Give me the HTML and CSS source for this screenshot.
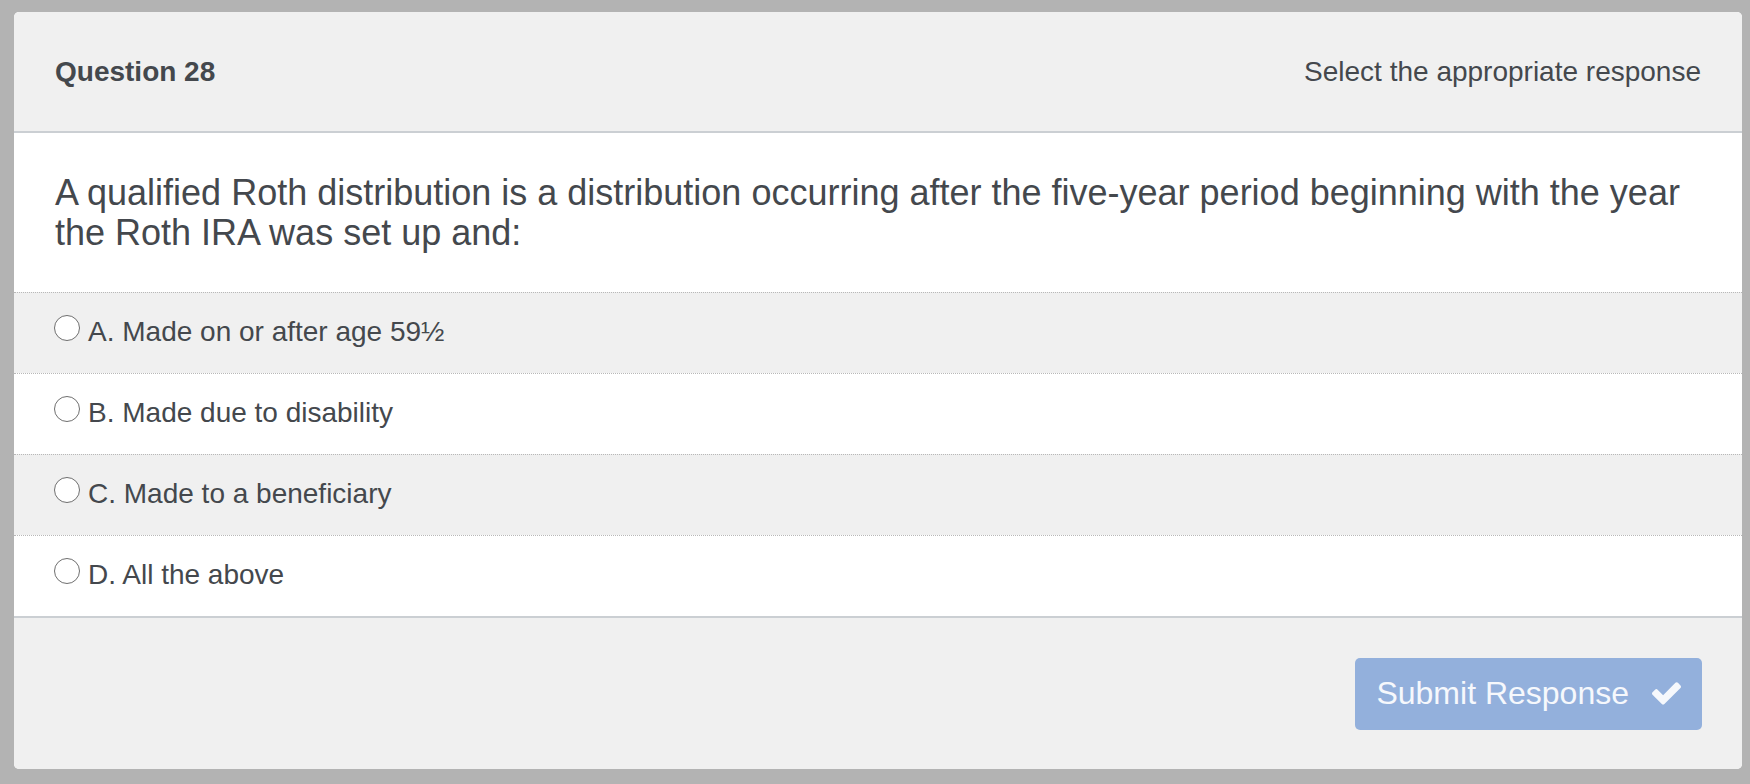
FILE: index.html
```html
<!DOCTYPE html>
<html lang="en">
<head>
    <meta charset="UTF-8">
    <meta name="viewport" content="width=device-width, initial-scale=1.0">
    <title>Question 28</title>
    <link rel="stylesheet" href="styles.css">
</head>
<body>

    <div class="question-card">
        <div class="card-header">
            <div class="question-number">Question 28</div>
            <div class="question-hint">Select the appropriate response</div>
        </div>

        <div class="question-text">
            A qualified Roth distribution is a distribution occurring after the five-year period beginning with the year the Roth IRA was set up and:
        </div>

        <div class="answers">
            <label class="answer-row">
                <input type="radio" name="answer" value="A" class="answer-radio">
                <span class="answer-label">A. Made on or after age 59½</span>
            </label>
            <label class="answer-row">
                <input type="radio" name="answer" value="B" class="answer-radio">
                <span class="answer-label">B. Made due to disability</span>
            </label>
            <label class="answer-row">
                <input type="radio" name="answer" value="C" class="answer-radio">
                <span class="answer-label">C. Made to a beneficiary</span>
            </label>
            <label class="answer-row">
                <input type="radio" name="answer" value="D" class="answer-radio">
                <span class="answer-label">D. All the above</span>
            </label>
        </div>

        <div class="card-footer">
            <button class="submit-button" disabled>
                Submit Response
                <svg class="check-icon" viewBox="121 330 1550 1200" width="29" height="23">
                    <path fill="currentColor" d="M1671 566q0 40-28 68l-724 724-136 136q-28 28-68 28t-68-28l-136-136-362-362q-28-28-28-68t28-68l136-136q28-28 68-28t68 28l294 295 656-657q28-28 68-28t68 28l136 136q28 28 28 68z"/>
                </svg>
            </button>
        </div>
    </div>

</body>
</html>
```

FILE: styles.css
```css
* {
    margin: 0;
    padding: 0;
    box-sizing: border-box;
}
body {
    background-color: #b3b3b3;
    color: #44484d;
    font-family: "Liberation Sans", Helvetica, Arial, sans-serif;
    padding: 12px 8px 15px 14px;
}
.question-card {
    background-color: white;
    border-radius: 5px;
    overflow: hidden;
}
.card-header {
    display: flex;
    justify-content: space-between;
    align-items: center;
    height: 121px;
    padding: 0 41px;
    background-color: #f0f0f0;
    border-bottom: 2px solid #cbcfd3;
    font-size: 28px;
    line-height: 1.2;
}
.question-number {
    font-weight: bold;
}
.question-text {
    font-size: 36px;
    line-height: 39.5px;
    padding: 40px 41px 40px;
}
.answer-row {
    display: flex;
    align-items: flex-start;
    gap: 8px;
    padding: 19px 40px 21px;
    border-top: 1px dotted #b8b8b8;
    font-size: 28px;
    line-height: 40px;
    cursor: pointer;
}
.answer-row:nth-child(odd) {
    background-color: #f0f0f0;
}
.answer-radio {
    appearance: none;
    -webkit-appearance: none;
    flex: none;
    width: 26px;
    height: 26px;
    margin-top: 3px;
    border: 1.7px solid #6f6f6f;
    border-radius: 50%;
    background-color: white;
    cursor: pointer;
}
.card-footer {
    display: flex;
    justify-content: flex-end;
    align-items: center;
    height: 153px;
    padding: 0 40px;
    background-color: #f0f0f0;
    border-top: 2px solid #cbcfd3;
}
.submit-button {
    display: flex;
    align-items: center;
    gap: 23px;
    height: 72px;
    padding: 0 21px;
    background-color: #93b0dc;
    color: #f6f8fc;
    border: none;
    border-radius: 5px;
    font-family: inherit;
    font-size: 32px;
}
.check-icon {
    display: block;
}
```
